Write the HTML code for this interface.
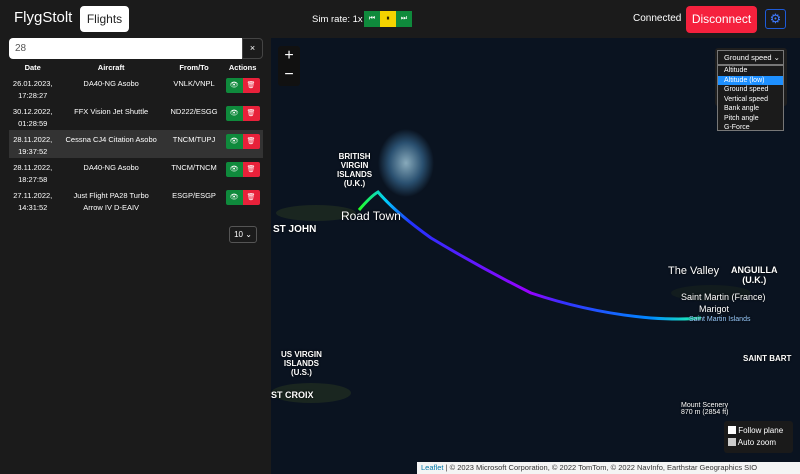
<!DOCTYPE html>
<html><head><meta charset="utf-8"><style>
*{box-sizing:border-box;margin:0;padding:0}
body{width:800px;height:474px;overflow:hidden;background:#1b1b1b;font-family:"Liberation Sans",sans-serif;color:#fff;position:relative}
.hdr{position:absolute;left:0;top:0;width:800px;height:38px;background:#1b1b1b}
.brand{position:absolute;left:14px;top:9px;font-size:15px}
.tab{position:absolute;left:80px;top:6px;width:49px;height:26px;background:#fff;color:#222;border-radius:4px;font-size:12px;text-align:center;line-height:26px}
.sim{position:absolute;left:312px;top:14px;font-size:9.5px}
.sb{position:absolute;top:11px;width:16px;height:16px;font-size:7px;text-align:center;line-height:16px}
.conn{position:absolute;left:633px;top:13px;font-size:10px}
.disc{position:absolute;left:686px;top:6px;width:71px;height:27px;background:#f5213d;border-radius:4px;font-size:12px;text-align:center;line-height:27px}
.gear{position:absolute;left:765px;top:9px;width:21px;height:20px;border:1px solid #1e5bd8;border-radius:3px;color:#3f7bff;font-size:13px;text-align:center;line-height:18px}
.side{position:absolute;left:0;top:38px;width:271px;height:436px;background:#1b1b1b}
.search{position:absolute;left:9px;top:0;width:233px;height:21px;background:#fff;border-radius:4px 0 0 4px;color:#555;font-size:10px;padding:5px 6px}
.x{position:absolute;left:242px;top:0;width:21px;height:21px;border:1px solid #444;border-radius:0 4px 4px 0;font-size:9px;text-align:center;line-height:19px}
table{position:absolute;left:9px;top:22px;width:254px;border-collapse:collapse;font-size:7.5px}
th{font-weight:bold;height:14px}
td{text-align:center;vertical-align:top;padding-top:4px;line-height:12px;height:28px}
tr.sel td{background:#333}
.act{display:inline-flex}
.act span{width:17px;height:15px;display:inline-block;font-size:7px;line-height:15px}
.g{background:#0f8a3c;border-radius:2px 0 0 2px}.r{background:#e8213a;border-radius:0 2px 2px 0}
.pg{position:absolute;left:229px;top:188px;width:28px;height:17px;border:1px solid #555;border-radius:3px;font-size:8px;text-align:center;line-height:15px}
.map{position:absolute;left:271px;top:38px;width:529px;height:436px;background:#0a1320;overflow:hidden}
.lbl{position:absolute;color:#fff;font-size:10px;text-shadow:0 0 2px #000;text-align:center}
.b{font-weight:bold;font-size:8px}
</style></head><body>
<div class="hdr">
<div class="brand">FlygStolt</div>
<div class="tab">Flights</div>
<div class="sim">Sim rate: 1x</div>
<div class="sb" style="left:364px;background:#0f8a3c">⏮</div>
<div class="sb" style="left:380px;background:#f4d300;color:#000">⏸</div>
<div class="sb" style="left:396px;background:#0f8a3c">⏭</div>
<div class="conn">Connected</div>
<div class="disc">Disconnect</div>
<div class="gear">⚙</div>
</div>
<div class="side">
<div class="search">28</div><div class="x">×</div>
<table>
<tr><th>Date</th><th>Aircraft</th><th>From/To</th><th>Actions</th></tr>
<tr><td>26.01.2023,<br>17:28:27</td><td>DA40-NG Asobo</td><td>VNLK/VNPL</td><td><div class="act"><span class="g">👁</span><span class="r">🗑</span></div></td></tr>
<tr><td>30.12.2022,<br>01:28:59</td><td>FFX Vision Jet Shuttle</td><td>ND222/ESGG</td><td><div class="act"><span class="g">👁</span><span class="r">🗑</span></div></td></tr>
<tr class="sel"><td>28.11.2022,<br>19:37:52</td><td>Cessna CJ4 Citation Asobo</td><td>TNCM/TUPJ</td><td><div class="act"><span class="g">👁</span><span class="r">🗑</span></div></td></tr>
<tr><td>28.11.2022,<br>18:27:58</td><td>DA40-NG Asobo</td><td>TNCM/TNCM</td><td><div class="act"><span class="g">👁</span><span class="r">🗑</span></div></td></tr>
<tr><td>27.11.2022,<br>14:31:52</td><td>Just Flight PA28 Turbo<br>Arrow IV D-EAIV</td><td>ESGP/ESGP</td><td><div class="act"><span class="g">👁</span><span class="r">🗑</span></div></td></tr>
</table>
<div class="pg">10 ⌄</div>
</div>
<div class="map">
<svg width="529" height="436" style="position:absolute;left:0;top:0">
<defs><linearGradient id="gr" x1="0" x2="1"><stop offset="0" stop-color="#2f2"/><stop offset="0.08" stop-color="#0cf"/><stop offset="0.15" stop-color="#23f"/><stop offset="0.5" stop-color="#90f"/><stop offset="0.6" stop-color="#33f"/><stop offset="0.85" stop-color="#08f"/><stop offset="1" stop-color="#2fa"/></linearGradient>
<radialGradient id="isl"><stop offset="0" stop-color="#8ab"/><stop offset="0.6" stop-color="#2a5070"/><stop offset="1" stop-color="#0a1320"/></radialGradient></defs>
<ellipse cx="135" cy="125" rx="28" ry="34" fill="url(#isl)"/>
<ellipse cx="45" cy="175" rx="40" ry="8" fill="#1a2620"/>
<ellipse cx="40" cy="355" rx="40" ry="10" fill="#1a2620"/>
<ellipse cx="440" cy="255" rx="40" ry="8" fill="#121c1e"/>
<path d="M88 172 Q100 158 107 154 Q125 175 160 200 Q210 230 260 255 Q320 275 380 280 Q410 282 430 280" stroke="url(#gr)" stroke-width="3" fill="none"/>
</svg>
<div style="position:absolute;left:7px;top:8px;width:22px;height:40px;background:#111;border-radius:3px;font-size:16px;text-align:center;line-height:19px">+<br>−</div>
<div class="lbl b" style="left:66px;top:114px">BRITISH<br>VIRGIN<br>ISLANDS<br>(U.K.)</div>
<div class="lbl" style="left:70px;top:171px;font-size:12px">Road Town</div>
<div class="lbl b" style="left:2px;top:186px;font-size:10px">ST JOHN</div>
<div class="lbl" style="left:397px;top:227px;font-size:11px">The Valley</div>
<div class="lbl b" style="left:460px;top:227px;font-size:9px">ANGUILLA<br>(U.K.)</div>
<div class="lbl" style="left:410px;top:254px;font-size:9px">Saint Martin (France)</div>
<div class="lbl" style="left:428px;top:266px;font-size:9px">Marigot</div>
<div class="lbl" style="left:418px;top:278px;font-size:7px;color:#9cf">Saint Martin Islands</div>
<div class="lbl b" style="left:472px;top:316px">SAINT BART</div>
<div class="lbl b" style="left:10px;top:312px">US VIRGIN<br>ISLANDS<br>(U.S.)</div>
<div class="lbl b" style="left:0;top:352px;font-size:9px">ST CROIX</div>
<div class="lbl" style="left:410px;top:364px;font-size:7px;text-align:left">Mount Scenery<br>870 m (2854 ft)</div>
<div style="position:absolute;left:444px;top:10px;width:72px;height:58px;background:#1e1e1e;border-radius:3px"></div>
<div style="position:absolute;left:446px;top:12px;width:67px;height:15px;border:1px solid #777;background:#1b1b1b;font-size:7.5px;line-height:13px;padding-left:6px">Ground speed ⌄</div>
<div style="position:absolute;left:446px;top:27px;width:67px;height:66px;border:1px solid #777;background:#1b1b1b;font-size:7px;line-height:9.5px">
<div style="padding-left:6px">Altitude</div><div style="padding-left:6px;background:#1e90ff">Altitude (low)</div><div style="padding-left:6px">Ground speed</div><div style="padding-left:6px">Vertical speed</div><div style="padding-left:6px">Bank angle</div><div style="padding-left:6px">Pitch angle</div><div style="padding-left:6px">G-Force</div></div>
<div style="position:absolute;left:453px;top:383px;width:69px;height:32px;background:#1a1a1a;border-radius:3px;font-size:8px;padding:4px 4px;line-height:12px"><span style="display:inline-block;width:8px;height:8px;background:#fff;vertical-align:-1px"></span> Follow plane<br><span style="display:inline-block;width:8px;height:8px;background:#ccc;vertical-align:-1px"></span> Auto zoom</div>
<div style="position:absolute;left:146px;top:424px;width:383px;height:12px;background:#f4f4f4;color:#333;font-size:7.5px;line-height:12px;padding-left:4px;white-space:nowrap"><span style="color:#0078a8">Leaflet</span> | © 2023 Microsoft Corporation, © 2022 TomTom, © 2022 NavInfo, Earthstar Geographics SIO</div>
</div>
</body></html>
